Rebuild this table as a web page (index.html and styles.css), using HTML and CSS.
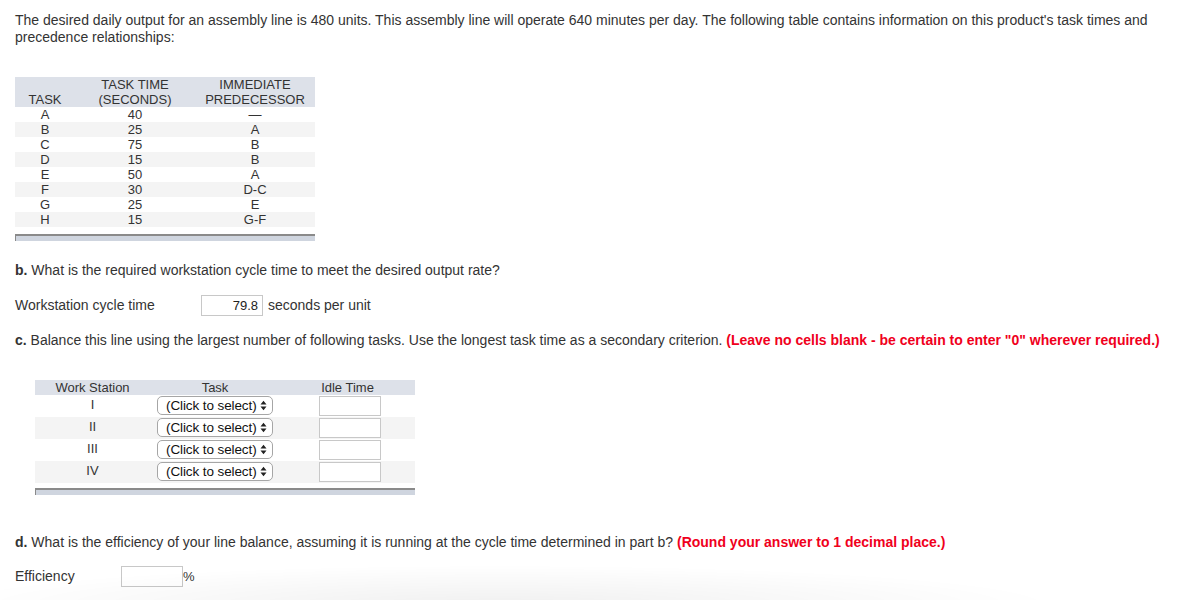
FILE: index.html
```html
<!DOCTYPE html>
<html>
<head>
<meta charset="utf-8">
<link rel="stylesheet" href="styles.css">
</head>
<body>
<div class="page">
  <p class="intro">The desired daily output for an assembly line is 480 units. This assembly line will operate 640 minutes per day. The following table contains information on this product's task times and precedence relationships:</p>

  <table class="tasks">
    <thead>
      <tr><th class="c1">TASK</th><th class="c2">TASK TIME<br>(SECONDS)</th><th class="c3">IMMEDIATE<br>PREDECESSOR</th></tr>
    </thead>
    <tbody>
      <tr><td>A</td><td>40</td><td>—</td></tr>
      <tr class="alt"><td>B</td><td>25</td><td>A</td></tr>
      <tr><td>C</td><td>75</td><td>B</td></tr>
      <tr class="alt"><td>D</td><td>15</td><td>B</td></tr>
      <tr><td>E</td><td>50</td><td>A</td></tr>
      <tr class="alt"><td>F</td><td>30</td><td>D-C</td></tr>
      <tr><td>G</td><td>25</td><td>E</td></tr>
      <tr class="alt"><td>H</td><td>15</td><td>G-F</td></tr>
    </tbody>
  </table>
  <div class="tbar bar1"></div>

  <p class="q qb"><b>b.</b> What is the required workstation cycle time to meet the desired output rate?</p>
  <div class="answer">
    <span class="label lbl-wct">Workstation cycle time</span>
    <span class="box filled">79.8</span>
    <span class="unit">seconds per unit</span>
  </div>

  <p class="q qc"><b>c.</b> Balance this line using the largest number of following tasks. Use the longest task time as a secondary criterion. <span class="red">(Leave no cells blank - be certain to enter "0" wherever required.)</span></p>

  <table class="stations">
    <thead>
      <tr><th class="s1">Work Station</th><th class="s2">Task</th><th class="s3">Idle Time</th></tr>
    </thead>
    <tbody>
      <tr><td>I</td><td><span class="sel"><span class="seltxt">(Click to select)</span><svg width="7" height="11" viewBox="0 0 7 11"><path d="M0.5 4.5 L3.5 0.8 L6.5 4.5 Z M0.5 6.5 L3.5 10.2 L6.5 6.5 Z" fill="#222"/></svg></span></td><td><span class="box idle"></span></td></tr>
      <tr class="alt"><td>II</td><td><span class="sel"><span class="seltxt">(Click to select)</span><svg width="7" height="11" viewBox="0 0 7 11"><path d="M0.5 4.5 L3.5 0.8 L6.5 4.5 Z M0.5 6.5 L3.5 10.2 L6.5 6.5 Z" fill="#222"/></svg></span></td><td><span class="box idle"></span></td></tr>
      <tr><td>III</td><td><span class="sel"><span class="seltxt">(Click to select)</span><svg width="7" height="11" viewBox="0 0 7 11"><path d="M0.5 4.5 L3.5 0.8 L6.5 4.5 Z M0.5 6.5 L3.5 10.2 L6.5 6.5 Z" fill="#222"/></svg></span></td><td><span class="box idle"></span></td></tr>
      <tr class="alt"><td>IV</td><td><span class="sel"><span class="seltxt">(Click to select)</span><svg width="7" height="11" viewBox="0 0 7 11"><path d="M0.5 4.5 L3.5 0.8 L6.5 4.5 Z M0.5 6.5 L3.5 10.2 L6.5 6.5 Z" fill="#222"/></svg></span></td><td><span class="box idle"></span></td></tr>
    </tbody>
  </table>
  <div class="tbar bar2"></div>

  <p class="q qd"><b>d.</b> What is the efficiency of your line balance, assuming it is running at the cycle time determined in part b? <span class="red">(Round your answer to 1 decimal place.)</span></p>
  <div class="answer eff">
    <span class="label lbl-eff">Efficiency</span>
    <span class="box"></span>
    <span class="pct">%</span>
  </div>
</div>
<div class="shade"></div>
</body>
</html>
```

FILE: styles.css
```css
html, body {
  margin: 0;
  padding: 0;
  background: #fff;
}

body {
  font-family: "Liberation Sans", Arial, sans-serif;
  color: #333;
  font-size: 14px;
  line-height: 17px;
}

.page {
  padding: 12px 15px 0 15px;
}

.intro {
  margin: 0;
  width: 1150px;
}

.tasks {
  margin-top: 31px;
  width: 300px;
  border-collapse: collapse;
  font-size: 13px;
  line-height: 15px;
  color: #333;
}

.tasks th {
  font-weight: normal;
  background: #dde1e9;
  vertical-align: bottom;
  padding: 0;
  text-align: center;
}

.tasks .c1 { width: 60px; }
.tasks .c2 { width: 120px; }
.tasks .c3 { width: 120px; }

.tasks td {
  padding: 0;
  text-align: center;
  height: 15px;
}

.alt td {
  background: #f4f4f4;
}

.tbar {
  background: #cfd5df;
  border-top: 2px solid #8a8a8a;
  border-left: 1px solid #8a8a8a;
  height: 5px;
  box-sizing: content-box;
}

.bar1 {
  width: 299px;
  margin-top: 7px;
}

.bar2 {
  width: 379px;
  margin-left: 20px;
  margin-top: 5px;
}

.q {
  margin: 0;
}

.q b {
  font-weight: bold;
}

.qb {
  margin-top: 21px;
}

.qc {
  margin-top: 16px;
}

.qd {
  margin-top: 39px;
}

.red {
  color: #f0001c;
  font-weight: bold;
}

.answer {
  display: flex;
  align-items: center;
  margin-top: 16px;
}

.answer.eff {
  margin-top: 15px;
}

.label {
  display: inline-block;
}

.lbl-wct {
  width: 186px;
}

.lbl-eff {
  width: 106px;
}

.box {
  display: inline-block;
  box-sizing: border-box;
  width: 62px;
  height: 21px;
  border: 1px solid #c8c8c8;
  background: #fff;
  text-align: right;
  padding: 1px 4px 0 0;
  line-height: 18px;
  font-size: 13px;
  color: #222;
}

.unit {
  margin-left: 5px;
}

.pct {
  font-size: 13px;
}

.stations {
  margin-top: 31px;
  margin-left: 20px;
  width: 380px;
  border-collapse: collapse;
  font-size: 13px;
  line-height: 15px;
}

.stations th {
  font-weight: normal;
  background: #dde1e9;
  padding: 0;
  text-align: center;
  height: 15px;
}

.stations .s1 { width: 115px; }
.stations .s2 { width: 130px; }
.stations .s3 { width: 135px; }

.stations td {
  text-align: center;
  padding: 1px 0 0 0;
  height: 21px;
  box-sizing: content-box;
  vertical-align: top;
}

.stations td:first-child {
  padding-top: 2px;
  height: 20px;
}

.sel {
  display: inline-flex;
  align-items: center;
  justify-content: space-between;
  box-sizing: border-box;
  width: 116px;
  height: 19px;
  padding: 0 5px 0 8px;
  border: 1px solid #a6a6a6;
  border-radius: 5px;
  background: #fff;
  font-size: 14px;
  color: #111;
  vertical-align: top;
  white-space: nowrap;
}

.seltxt {
  white-space: nowrap;
  font-size: 13.5px;
  letter-spacing: -0.1px;
}

.box.idle {
  height: 20px;
  vertical-align: top;
  margin-left: 4px;
}

.shade {
  position: fixed;
  left: 0;
  right: 0;
  bottom: 0;
  height: 40px;
  pointer-events: none;
  background: radial-gradient(ellipse 560px 40px at 500px 45px, rgba(0,0,0,0.06), rgba(0,0,0,0) 100%);
}
```
